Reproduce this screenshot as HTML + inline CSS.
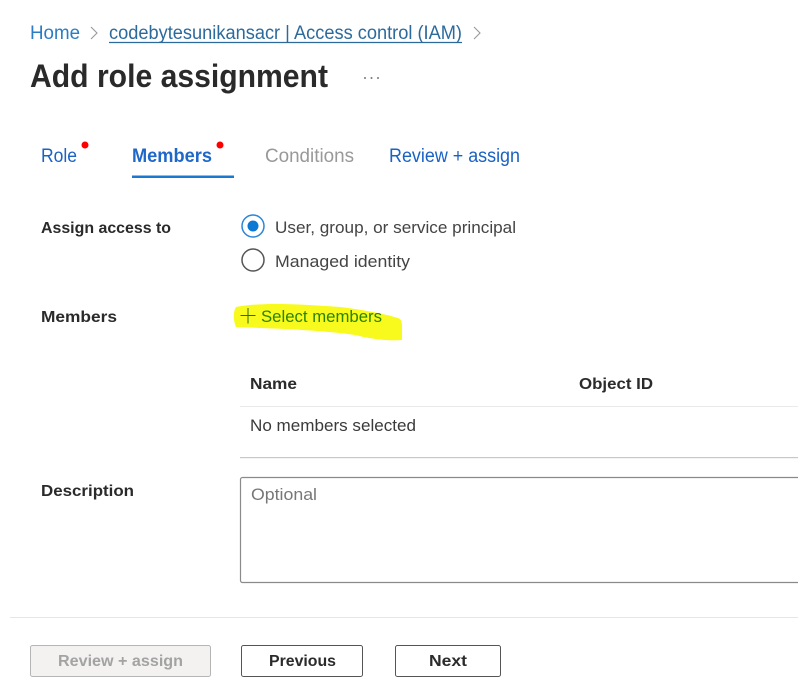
<!DOCTYPE html>
<html><head><meta charset="utf-8"><style>
html,body{margin:0;padding:0;background:#fff;width:798px;height:680px;overflow:hidden}
svg{display:block;filter:blur(.35px)}
text{font-family:"Liberation Sans",sans-serif}
</style></head><body>
<svg width="798" height="680" viewBox="0 0 798 680" xmlns="http://www.w3.org/2000/svg">
<text x="30" y="39" font-size="19" fill="#2b7cc4" textLength="50" lengthAdjust="spacingAndGlyphs">Home</text>
<path d="M91 27l6 6-6 6" fill="none" stroke="#999" stroke-width="1.100"/>
<text x="109" y="39" font-size="19" fill="#2c6a9c" textLength="353" lengthAdjust="spacingAndGlyphs">codebytesunikansacr | Access control (IAM)</text>
<path d="M109 42.500H462" stroke="#2c6a9c" stroke-width="1.200"/>
<path d="M474 27l6 6-6 6" fill="none" stroke="#999" stroke-width="1.100"/>
<text x="30" y="87" font-size="32" font-weight="700" fill="#2a2a2a" textLength="298" lengthAdjust="spacingAndGlyphs">Add role assignment</text>
<g fill="#777"><circle cx="365" cy="78" r="1"/><circle cx="371.500" cy="78" r="1"/><circle cx="378" cy="78" r="1"/></g>

<text x="41" y="162" font-size="19" fill="#1a62c4" textLength="36" lengthAdjust="spacingAndGlyphs">Role</text>
<circle cx="85" cy="145" r="3.500" fill="#f00"/>
<text x="132" y="162" font-size="19" font-weight="700" fill="#1f68c8" textLength="80" lengthAdjust="spacingAndGlyphs">Members</text>
<circle cx="220" cy="145" r="3.500" fill="#f00"/>
<rect x="132" y="175.500" width="102" height="2.500" fill="#1b78d0"/>
<text x="265" y="162" font-size="19" fill="#999" textLength="89" lengthAdjust="spacingAndGlyphs">Conditions</text>
<text x="389" y="162" font-size="19" fill="#1a62c4" textLength="131" lengthAdjust="spacingAndGlyphs">Review + assign</text>

<text x="41" y="233" font-size="16" font-weight="700" fill="#2a2a2a" textLength="130" lengthAdjust="spacingAndGlyphs">Assign access to</text>
<circle cx="253" cy="226" r="11" fill="#fff" stroke="#2b85d8" stroke-width="1.500"/>
<circle cx="253" cy="226" r="5.500" fill="#0b78d4"/>
<text x="275" y="233" font-size="17" fill="#444" textLength="241" lengthAdjust="spacingAndGlyphs">User, group, or service principal</text>
<circle cx="253" cy="260" r="11" fill="#fff" stroke="#555" stroke-width="1.500"/>
<text x="275" y="267" font-size="17" fill="#444" textLength="135" lengthAdjust="spacingAndGlyphs">Managed identity</text>

<text x="41" y="322" font-size="16" font-weight="700" fill="#2a2a2a" textLength="76" lengthAdjust="spacingAndGlyphs">Members</text>
<path d="M236 307 C260 302 300 304 340 307 C365 310 385 314 398 318 C401 319 402 322 402 326 L402 340 C385 341 372 339 355 335 C330 331 290 329 236 327 C233 320 233 312 236 307 Z" fill="#f7fa1c"/>
<path d="M248 308V323.500M240.500 315.500H255.500" stroke="#2a6a18" stroke-width="1" fill="none"/>
<text x="261" y="322" font-size="17" fill="#2c8400" textLength="121" lengthAdjust="spacingAndGlyphs">Select members</text>

<text x="250" y="389" font-size="16" font-weight="700" fill="#2b2b2b" textLength="47" lengthAdjust="spacingAndGlyphs">Name</text>
<text x="579" y="389" font-size="16" font-weight="700" fill="#2b2b2b" textLength="74" lengthAdjust="spacingAndGlyphs">Object ID</text>
<rect x="240" y="406" width="558" height="1" fill="#eaeaea"/>
<text x="250" y="431" font-size="17" fill="#3a3a3a" textLength="166" lengthAdjust="spacingAndGlyphs">No members selected</text>
<rect x="240" y="457" width="558" height="1.200" fill="#c8c8c8"/>

<text x="41" y="496" font-size="16" font-weight="700" fill="#2a2a2a" textLength="93" lengthAdjust="spacingAndGlyphs">Description</text>
<rect x="240.500" y="477.500" width="570" height="105" rx="2" fill="#fff" stroke="#8a8a8a" stroke-width="1.200"/>
<text x="251" y="500" font-size="17" fill="#777" textLength="66" lengthAdjust="spacingAndGlyphs">Optional</text>

<rect x="10" y="617" width="788" height="1" fill="#e6e6e6"/>
<rect x="30.500" y="645.500" width="180" height="31" rx="2" fill="#f3f2f1" stroke="#b5b5b5"/>
<text x="58" y="666" font-size="16" font-weight="700" fill="#a3a3a3" textLength="125" lengthAdjust="spacingAndGlyphs">Review + assign</text>
<rect x="241.500" y="645.500" width="121" height="31" rx="2" fill="#fff" stroke="#555"/>
<text x="269" y="666" font-size="16" font-weight="700" fill="#2b2b2b" textLength="67" lengthAdjust="spacingAndGlyphs">Previous</text>
<rect x="395.500" y="645.500" width="105" height="31" rx="2" fill="#fff" stroke="#555"/>
<text x="429" y="666" font-size="16" font-weight="700" fill="#2b2b2b" textLength="38" lengthAdjust="spacingAndGlyphs">Next</text>
</svg>
</body></html>
